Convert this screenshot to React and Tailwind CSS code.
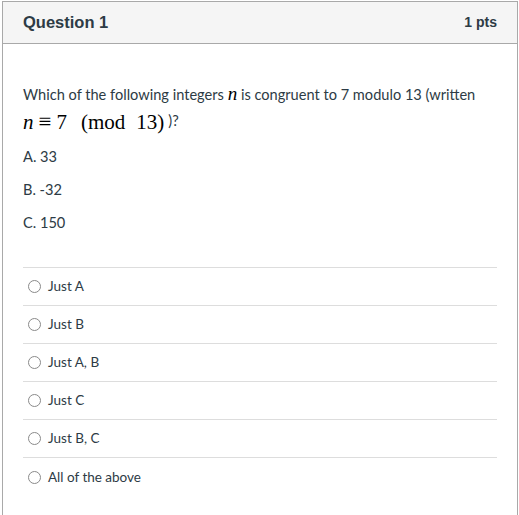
import React from 'react';

const options = ['Just A', 'Just B', 'Just A, B', 'Just C', 'Just B, C', 'All of the above'];

const Radio = () => (
  <span className="inline-block w-[13px] h-[13px] rounded-full border border-[#8a8a8a] bg-white shrink-0" />
);

export default function App() {
  return (
    <div className="min-h-screen bg-white pt-[1px] pl-[2px]" style={{ fontFamily: 'Lato, "Liberation Sans", sans-serif' }}>
      <div className="w-[516px] h-[540px] border border-[#a9a9a9] text-[#2d3b45]">
        <div className="h-[42px] bg-[#f5f5f5] border-b border-[#a9a9a9] flex items-center justify-between px-[20px]">
          <span className="text-[16.5px] font-bold" style={{ fontFamily: '"Liberation Sans", Arial, sans-serif' }}>Question 1</span>
          <span className="text-[14px] font-bold" style={{ fontFamily: '"Liberation Sans", Arial, sans-serif' }}>1 pts</span>
        </div>
        <div className="px-[20px] pt-[40px]">
          <div className="text-[14.6px] leading-[20px]">
            Which of the following integers{' '}
            <span className="italic text-[19px] text-black" style={{ fontFamily: '"Liberation Serif", serif' }}>n</span>{' '}
            is congruent to 7 modulo 13 (written
          </div>
          <div className="flex items-end h-[24px] mt-[5px]">
            <span className="text-[21px] leading-[24px] text-black" style={{ fontFamily: '"Liberation Serif", serif' }}>
              <span className="italic">n</span>
              <span className="mx-[5px] text-[23px]">≡</span>
              7
              <span className="ml-[14px]">(mod</span>
              <span className="ml-[11px]">13)</span>
            </span>
            <span className="text-[14.6px] leading-[20px] ml-[4px] mb-[3px]">)?</span>
          </div>
          <div className="text-[14.6px] leading-[20px] mt-[13px]">A. 33</div>
          <div className="text-[14.6px] leading-[20px] mt-[13px]">B. -32</div>
          <div className="text-[14.6px] leading-[20px] mt-[13px]">C. 150</div>
          <div className="mt-[34px] border-t border-[#dddddd]">
            {options.map((o, i) => (
              <div
                key={o}
                className={`h-[38px] flex items-center gap-[7px] pl-[5px] ${i < options.length - 1 ? 'border-b border-[#dddddd]' : ''}`}
              >
                <Radio />
                <span className="text-[13.5px]">{o}</span>
              </div>
            ))}
          </div>
        </div>
      </div>
    </div>
  );
}
